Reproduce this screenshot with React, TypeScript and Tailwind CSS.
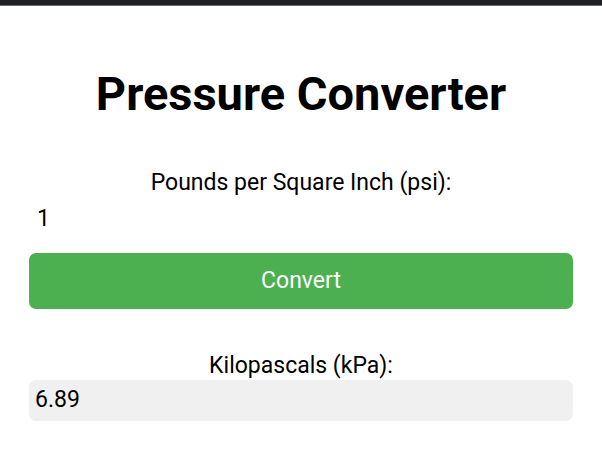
import { useState } from "react";

const App = () => {
    const [psi, setPsi] = useState("1");
    const [kpa, setKpa] = useState("6.89");

    const convert = () => {
        const value = parseFloat(psi);
        if (!isNaN(value)) {
            setKpa((value * 6.89476).toFixed(2));
        }
    };

    return (
        <div className="w-[602px] h-[450px] bg-white font-['Roboto',sans-serif] text-black overflow-hidden">
            <div className="h-[6px] bg-[#1f2023] border-b border-[#6b6b6b]"></div>

            <div className="px-[29px]">
                {/* Title */}
                <h1 className="pt-[60px] text-center text-[47px] leading-[56px] font-bold">Pressure Converter</h1>

                {/* Input */}
                <label className="block mt-[47px] text-center text-[23px] leading-[28px]">
                    Pounds per Square Inch (psi):
                </label>
                <input
                    value={psi}
                    onChange={(e) => setPsi(e.target.value)}
                    className="block mt-[2px] w-full h-[38px] px-[8px] text-[23px] outline-none bg-transparent"
                />

                {/* Button */}
                <button
                    onClick={convert}
                    className="mt-[16px] w-full h-[56px] rounded-[7px] bg-[#4caf50] text-white text-[23px]"
                >
                    Convert
                </button>

                {/* Output */}
                <label className="block mt-[43px] text-center text-[23px] leading-[28px]">
                    Kilopascals (kPa):
                </label>
                <div className="h-[41px] rounded-[7px] bg-[#f0f0f0] px-[6px] flex items-center text-[23px]">
                    {kpa}
                </div>
            </div>
        </div>
    );
};

export default App;
